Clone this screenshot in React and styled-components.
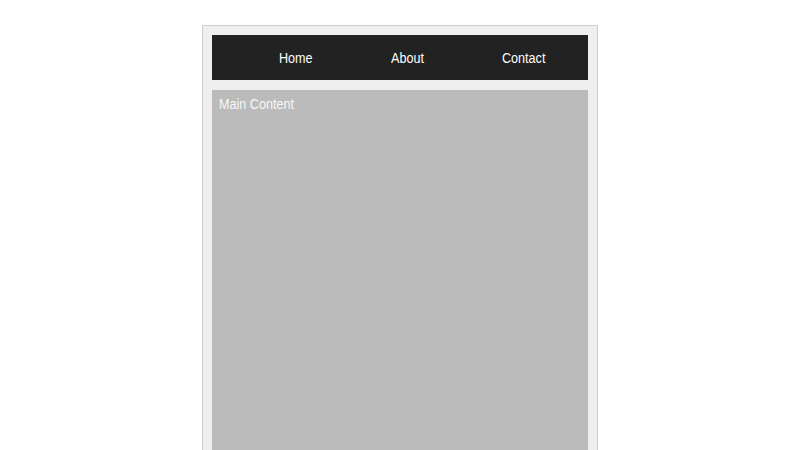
import React from 'react';
import styled, { createGlobalStyle } from 'styled-components';

const GlobalStyle = createGlobalStyle`
  body {
    margin: 0;
    background: #ffffff;
    font-family: "Liberation Sans", Arial, sans-serif;
  }
`;

// Page frame
const Frame = styled.div`
  box-sizing: border-box;
  width: 396px;
  margin: 25px auto 0;
  padding: 9px;
  border: 1px solid #cfcfcf;
  border-bottom: none;
  background: #efefef;
  display: flex;
  flex-direction: column;
  gap: 10px;
`;

// Slightly condensed label text, as in the reference type
const Label = styled.span`
  display: inline-block;
  font-size: 14px;
  transform: scaleX(0.9);
  transform-origin: left center;
  white-space: nowrap;
`;

// Top navigation
const NavBar = styled.nav`
  background: #222222;
  height: 45px;
`;

const NavList = styled.ul`
  list-style: none;
  margin: 0;
  padding: 0 0 0 67px;
  height: 100%;
  display: grid;
  grid-template-columns: 112px 111px 1fr;
  align-items: center;
`;

const NavLink = styled.a`
  color: #ffffff;
  text-decoration: none;
`;

// Main area
const Main = styled.main`
  background: #bbbbbb;
  min-height: 400px;
  padding: 5px 7px;
  color: #f8f8f8;
`;

const links = ['Home', 'About', 'Contact'];

export default function App() {
  return (
    <>
      <GlobalStyle />
      <Frame>
        <NavBar>
          <NavList>
            {links.map((l) => (
              <li key={l}>
                <NavLink href="#">
                  <Label>{l}</Label>
                </NavLink>
              </li>
            ))}
          </NavList>
        </NavBar>
        <Main>
          <Label>Main Content</Label>
        </Main>
      </Frame>
    </>
  );
}
